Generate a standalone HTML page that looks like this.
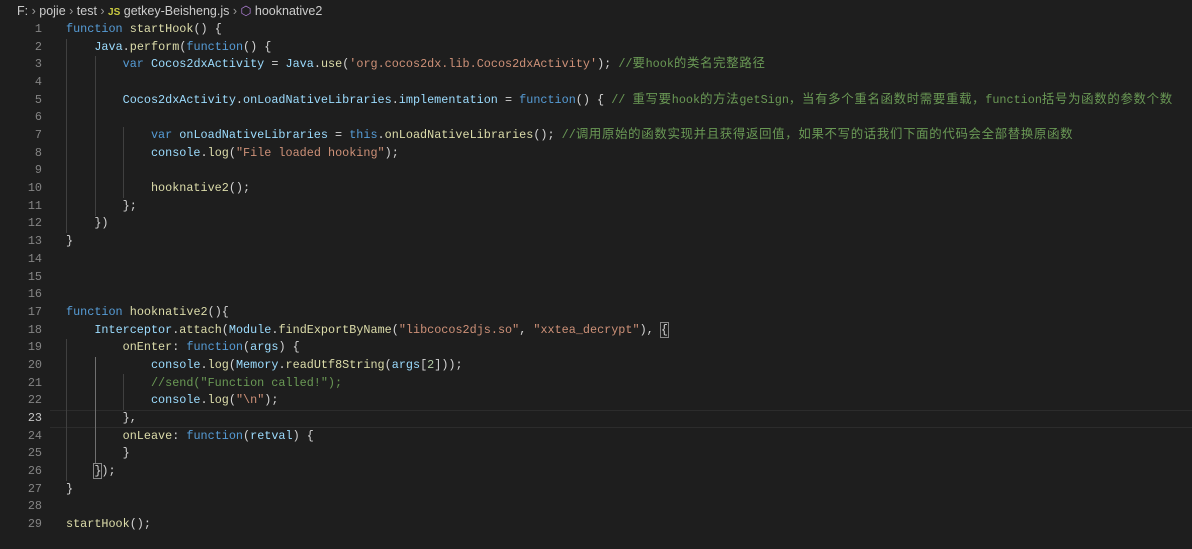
<!DOCTYPE html>
<html><head><meta charset="utf-8"><style>
body{margin:0;width:1192px;height:549px;background:#1e1e1e;overflow:hidden;position:relative;font-family:"Liberation Mono","Noto Sans CJK SC",monospace;}
.bc{position:absolute;left:17px;top:3px;font-family:"Liberation Sans",sans-serif;font-size:12.5px;color:#cccccc;white-space:pre}
.ln{position:absolute;left:0;width:42px;text-align:right;color:#858585;font-size:11.8px;height:17.68px;line-height:17.68px}
.l{position:absolute;left:66px;font-size:11.8px;height:17.68px;line-height:17.68px;white-space:pre;color:#d4d4d4}
.k{color:#569cd6}.v{color:#9cdcfe}.f{color:#dcdcaa}.s{color:#ce9178}.c{color:#6a9955}.n{color:#b5cea8}.cls{color:#4ec9b0}
.z{font-size:12.4px;letter-spacing:0.7px}
.g{position:absolute;width:1px;background:#404040}
</style></head><body>
<div class="bc">F: <span style="color:#999">›</span> pojie <span style="color:#999">›</span> test <span style="color:#999">›</span> <span style="color:#cbcb41;font-weight:bold;font-size:10px">JS</span> getkey-Beisheng.js <span style="color:#999">›</span> <span style="color:#b180d7">⬡</span> hooknative2</div>
<div style="position:absolute;left:50px;right:0;top:410px;height:16px;border-top:1px solid #2c2c2c;border-bottom:1px solid #2c2c2c"></div>
<div class="g" style="left:66px;top:39px;height:194px"></div>
<div class="g" style="left:95px;top:56px;height:160px"></div>
<div class="g" style="left:123px;top:127px;height:71px"></div>
<div class="g" style="left:66px;top:339px;height:142px"></div>
<div class="g" style="left:95px;top:357px;height:106px;background:#707070"></div>
<div class="g" style="left:123px;top:374px;height:36px"></div>
<div id="code"></div>
<script>
const L=[
'<span class="k">function</span> <span class="f">startHook</span>() {',
'    <span class="v">Java</span>.<span class="f">perform</span>(<span class="k">function</span>() {',
'        <span class="k">var</span> <span class="v">Cocos2dxActivity</span> = <span class="v">Java</span>.<span class="f">use</span>(<span class="s">\'org.cocos2dx.lib.Cocos2dxActivity\'</span>); <span class="c">//<span class="z">要</span>hook<span class="z">的类名完整路径</span></span>',
'',
'        <span class="v">Cocos2dxActivity</span>.<span class="v">onLoadNativeLibraries</span>.<span class="v">implementation</span> = <span class="k">function</span>() { <span class="c">// <span class="z">重写要</span>hook<span class="z">的方法</span>getSign<span class="z">，当有多个重名函数时需要重载，</span>function<span class="z">括号为函数的参数个数</span></span>',
'',
'            <span class="k">var</span> <span class="v">onLoadNativeLibraries</span> = <span class="k">this</span>.<span class="f">onLoadNativeLibraries</span>(); <span class="c">//<span class="z">调用原始的函数实现并且获得返回值，如果不写的话我们下面的代码会全部替换原函数</span></span>',
'            <span class="v">console</span>.<span class="f">log</span>(<span class="s">"File loaded hooking"</span>);',
'',
'            <span class="f">hooknative2</span>();',
'        };',
'    })',
'}','','','',
'<span class="k">function</span> <span class="f">hooknative2</span>(){',
'    <span class="v">Interceptor</span>.<span class="f">attach</span>(<span class="v">Module</span>.<span class="f">findExportByName</span>(<span class="s">"libcocos2djs.so"</span>, <span class="s">"xxtea_decrypt"</span>), <span style="outline:1px solid #888">{</span>',
'        <span class="f">onEnter</span>: <span class="k">function</span>(<span class="v">args</span>) {',
'            <span class="v">console</span>.<span class="f">log</span>(<span class="v">Memory</span>.<span class="f">readUtf8String</span>(<span class="v">args</span>[<span class="n">2</span>]));',
'            <span class="c">//send("Function called!");</span>',
'            <span class="v">console</span>.<span class="f">log</span>(<span class="s">"\\n"</span>);',
'        },',
'        <span class="f">onLeave</span>: <span class="k">function</span>(<span class="v">retval</span>) {',
'        }',
'    <span style="outline:1px solid #888">}</span>);',
'}','',
'<span class="f">startHook</span>();'];
let h='';L.forEach((t,i)=>{const y=21+i*17.68;h+=`<div class="ln" style="top:${y}px;${i==22?'color:#c6c6c6':''}">${i+1}</div><div class="l" style="top:${y}px">${t}</div>`});
document.getElementById('code').innerHTML=h;
</script>
</body></html>
